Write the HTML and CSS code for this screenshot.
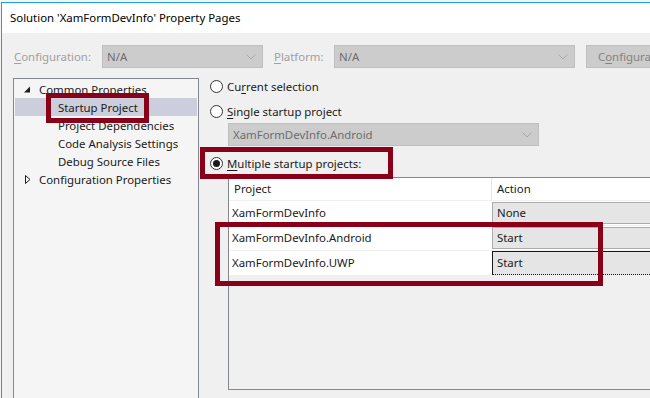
FILE: index.html
```html
<!DOCTYPE html>
<html lang="en">
<head>
    <meta charset="UTF-8">
    <title>Solution 'XamFormDevInfo' Property Pages</title>
    <link rel="stylesheet" href="styles.css">
</head>
<body>
    <div class="window">
        <div class="titlebar">Solution 'XamFormDevInfo' Property Pages</div>
        <div class="client">
            <div class="toolbar">
                <span class="label label-config"><u>C</u>onfiguration:</span>
                <div class="combo combo-config">
                    <span>N/A</span>
                    <svg class="chevron" width="10" height="6" viewBox="0 0 10 6"><polyline points="0.5,0.5 5,5 9.5,0.5" fill="none" stroke="#a8a8a8" stroke-width="1"/></svg>
                </div>
                <span class="label label-platform"><u>P</u>latform:</span>
                <div class="combo combo-platform">
                    <span>N/A</span>
                    <svg class="chevron" width="10" height="6" viewBox="0 0 10 6"><polyline points="0.5,0.5 5,5 9.5,0.5" fill="none" stroke="#a8a8a8" stroke-width="1"/></svg>
                </div>
                <div class="btn-manager">C<u>o</u>nfiguration Manager...</div>
            </div>

            <div class="main">
                <div class="tree">
                    <div class="tree-item level0">
                        <svg class="twisty" width="15" height="7" viewBox="0 0 15 7"><polygon points="6,0.5 6,6.5 0,6.5" fill="#1e1e1e"/></svg>
                        Common Properties
                    </div>
                    <div class="tree-item level1 selected">Startup Project</div>
                    <div class="tree-item level1">Project Dependencies</div>
                    <div class="tree-item level1">Code Analysis Settings</div>
                    <div class="tree-item level1">Debug Source Files</div>
                    <div class="tree-item level0">
                        <svg class="twisty" width="15" height="9" viewBox="0 0 15 9"><polygon points="1.5,0.5 6,4.5 1.5,8.5" fill="none" stroke="#1e1e1e" stroke-width="1"/></svg>
                        Configuration Properties
                    </div>
                </div>

                <div class="pane">
                    <div class="radio-row first"><span class="radio"></span>Cu<u>r</u>rent selection</div>
                    <div class="radio-row second"><span class="radio"></span><u>S</u>ingle startup project</div>
                    <div class="combo combo-single">
                        <span>XamFormDevInfo.Android</span>
                        <svg class="chevron" width="10" height="6" viewBox="0 0 10 6"><polyline points="0.5,0.5 5,5 9.5,0.5" fill="none" stroke="#a8a8a8" stroke-width="1"/></svg>
                    </div>
                    <div class="radio-row third"><span class="radio checked"></span><u>M</u>ultiple startup projects:</div>

                    <div class="grid">
                        <div class="grid-head">
                            <div class="col-project">Project</div>
                            <div class="col-action">Action</div>
                        </div>
                        <div class="grid-row">
                            <div class="col-project">XamFormDevInfo</div>
                            <div class="col-action"><div class="action-box">None</div></div>
                        </div>
                        <div class="grid-row">
                            <div class="col-project">XamFormDevInfo.Android</div>
                            <div class="col-action"><div class="action-box">Start</div></div>
                        </div>
                        <div class="grid-row">
                            <div class="col-project">XamFormDevInfo.UWP</div>
                            <div class="col-action"><div class="action-box focused">Start</div></div>
                        </div>
                    </div>
                </div>
            </div>
        </div>
    </div>

    <!-- red annotation boxes drawn over the dialog -->
    <div class="callout callout-startup"></div>
    <div class="callout callout-multiple"></div>
    <div class="callout callout-rows"></div>
</body>
</html>
```

FILE: styles.css
```css
:root {
    --window-edge: #1ba1e2;
    --panel-border: #828790;
    --callout: #8a0018;
    --disabled-bg: #cccccc;
    --disabled-border: #bfbfbf;
}

* {
    box-sizing: border-box;
}

body {
    margin: 0;
    height: 398px;
    overflow: hidden;
    background-color: #f4f4f4;
    font-family: "Noto Sans", "Open Sans", sans-serif;
    font-size: 11.4px;
    color: #1a1a1a;
}

u {
    text-underline-offset: 2px;
}

.window {
    margin: 2px 0 0 1px;
    height: 396px;
    border-top: 1px solid var(--window-edge);
    border-left: 1px solid var(--window-edge);
    background-color: #f0f0f0;
    white-space: nowrap;
}

.titlebar {
    height: 30px;
    line-height: 30px;
    padding-left: 8px;
    background-color: #fff;
    color: #000;
}

.client {
    padding: 12px 0 0 12px;
    overflow: hidden;
}

/* configuration / platform row */
.toolbar {
    display: flex;
    align-items: center;
    height: 23px;
}

.label {
    color: #a0a0a0;
    flex-shrink: 0;
}

.label-config {
    width: 88px;
}

.label-platform {
    width: 60px;
    margin-left: 11px;
}

.combo {
    display: flex;
    align-items: center;
    justify-content: space-between;
    height: 23px;
    padding: 0 6px 0 4px;
    background-color: var(--disabled-bg);
    border: 1px solid var(--disabled-border);
    color: #6d6d6d;
    flex-shrink: 0;
}

.combo-config {
    width: 161px;
}

.combo-platform {
    width: 241px;
}

.btn-manager {
    flex-shrink: 0;
    width: 140px;
    height: 23px;
    line-height: 21px;
    margin-left: 11px;
    padding-left: 11px;
    background-color: var(--disabled-bg);
    border: 1px solid var(--disabled-border);
    color: #838383;
}

/* tree + page */
.main {
    display: flex;
    margin: 10px 0 0 -1px;
}

.tree {
    flex-shrink: 0;
    width: 186px;
    height: 330px;
    padding: 1px;
    border: 1px solid var(--panel-border);
    background-color: #f5f5f5;
}

.tree-item {
    display: flex;
    align-items: center;
    height: 18px;
}

.tree-item.level0 {
    padding-left: 9px;
}

.tree-item.level1 {
    padding-left: 43px;
}

.tree-item.selected {
    background-color: #cccedb;
}

.twisty {
    flex-shrink: 0;
}

.pane {
    margin-left: 11px;
}

.radio-row {
    display: flex;
    align-items: center;
    height: 18px;
}

.radio-row.first {
    margin-top: -1px;
}

.radio-row.second {
    margin-top: 7px;
}

.radio-row.third {
    margin-top: 8px;
}

.radio {
    position: relative;
    width: 13px;
    height: 13px;
    margin-right: 4px;
    border: 1px solid #333;
    border-radius: 50%;
    background-color: #fff;
}

.radio.checked::after {
    content: "";
    position: absolute;
    left: 2px;
    top: 2px;
    width: 7px;
    height: 7px;
    border-radius: 50%;
    background-color: #1a1a1a;
}

.combo-single {
    width: 311px;
    margin: 3px 0 0 18px;
}

.grid {
    width: 450px;
    height: 213px;
    margin: 5px 0 0 18px;
    border: 1px solid var(--panel-border);
    border-right: none;
    background-color: #f0f0f0;
}

.grid-head,
.grid-row {
    display: flex;
    background-color: #fff;
    border-bottom: 1px solid #f0f0f0;
}

.grid-head {
    height: 23px;
    line-height: 22px;
}

.grid-head .col-project {
    padding-left: 5px;
    border-right: 1px solid #e5e5e5;
}

.grid-head .col-action {
    padding-left: 5px;
}

.grid-row {
    height: 25px;
}

.col-project {
    flex-shrink: 0;
    width: 263px;
}

.grid-row .col-project {
    padding-left: 3px;
    line-height: 24px;
}

.col-action {
    flex: 1;
}

.action-box {
    height: 22px;
    margin-top: 1px;
    line-height: 20px;
    padding-left: 4px;
    background-color: #e5e5e5;
    border: 1px solid #acacac;
}

.action-box.focused {
    height: 24px;
    margin-top: 0;
    line-height: 22px;
    border-color: #1a1a1a;
    border-bottom-style: dotted;
}

/* annotations */
.callout {
    position: absolute;
    border: 5px solid var(--callout);
}

.callout-startup {
    left: 46px;
    top: 93px;
    width: 103px;
    height: 30px;
}

.callout-multiple {
    left: 200px;
    top: 147px;
    width: 193px;
    height: 32px;
}

.callout-rows {
    left: 215px;
    top: 222px;
    width: 388px;
    height: 64px;
}
```
